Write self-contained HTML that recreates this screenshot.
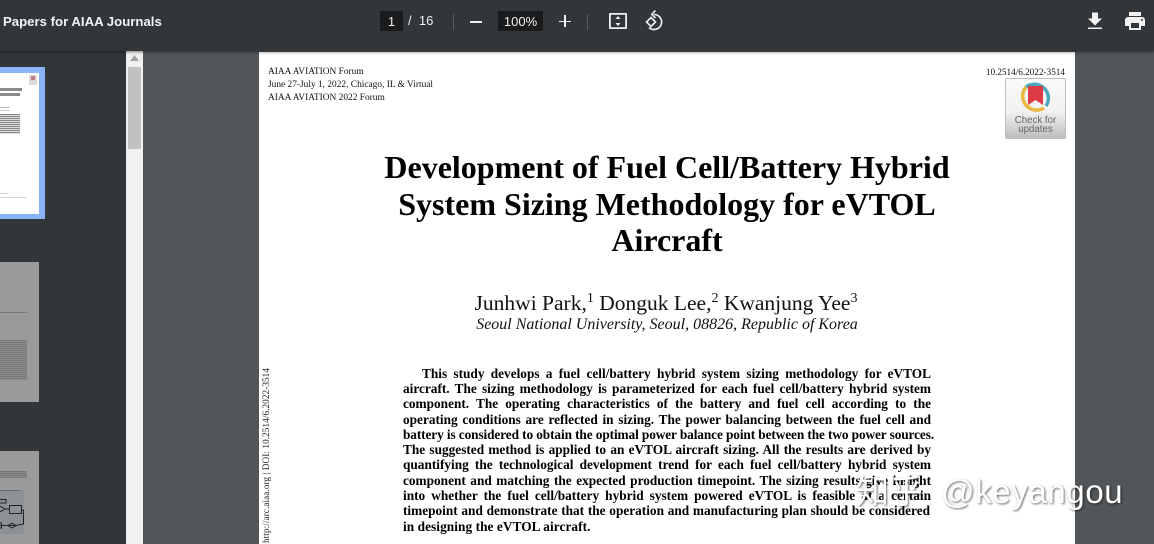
<!DOCTYPE html>
<html lang="en"><head><meta charset="utf-8"><title>Papers for AIAA Journals</title>
<style>
html,body{margin:0;padding:0;width:1154px;height:544px;overflow:hidden;background:#525659}
*{box-sizing:border-box}
.a{position:absolute;white-space:nowrap}
#tb{position:absolute;left:0;top:0;width:1154px;height:51px;background:#323639;box-shadow:0 1px 3px rgba(0,0,0,.5);z-index:5;font-family:"Liberation Sans",sans-serif;color:#f1f1f1}
#side{position:absolute;left:0;top:51px;width:126px;height:493px;background:#323639}
#sb{position:absolute;left:126px;top:51px;width:17px;height:493px;background:#f1f1f1}
#page{position:absolute;left:259px;top:52px;width:816px;height:492px;background:#fff;font-family:"Liberation Serif",serif;color:#111}
.s{font-size:9.4px;line-height:13px;position:absolute;white-space:nowrap}
.t{position:absolute;left:0;width:816px;text-align:center;font-weight:bold;font-size:32px;line-height:37px;color:#000;white-space:nowrap}
.j{position:absolute;left:144px;width:528px;font-weight:bold;font-size:13.3px;line-height:15px;text-align:justify;text-align-last:justify;white-space:nowrap;color:#000}
</style></head><body>
<div id="side">
 <div class="a" style="left:0;top:16px;width:45px;height:152px;background:#8ab4f8"></div>
 <div class="a" style="left:0;top:22px;width:39px;height:141px;background:#fff;overflow:hidden">
  <div class="a" style="left:29px;top:2px;width:8px;height:10px;background:#e0d8d8"></div>
  <div class="a" style="left:31px;top:3px;width:4px;height:4px;background:#c07a82"></div>
  <div class="a" style="left:0;top:15px;width:22px;height:3px;background:#8a8a8a"></div>
  <div class="a" style="left:0;top:20px;width:20px;height:3px;background:#8a8a8a"></div>
  <div class="a" style="left:0;top:34px;width:10px;height:1px;background:#bbb"></div>
  <div class="a" style="left:0;top:37px;width:10px;height:1px;background:#ccc"></div>
  <div class="a" style="left:0;top:41px;width:20px;height:20px;background:repeating-linear-gradient(#888 0 1px,#ddd 1px 2px)"></div>
  <div class="a" style="left:0;top:120px;width:8px;height:1px;background:#ccc"></div>
  <div class="a" style="left:0;top:124px;width:26px;height:1px;background:#d4d4d4"></div>
 </div>
 <div class="a" style="left:0;top:211px;width:39px;height:140px;background:#9a9a9a;overflow:hidden">
  <div class="a" style="left:0;top:50px;width:27px;height:1px;background:#777"></div>
  <div class="a" style="left:0;top:78px;width:27px;height:40px;background:repeating-linear-gradient(#777 0 1px,#8d8d8d 1px 2px)"></div>
 </div>
 <div class="a" style="left:0;top:400px;width:39px;height:93px;background:#9b9b9b;overflow:hidden">
  <div class="a" style="left:0;top:20px;width:27px;height:7px;background:repeating-linear-gradient(#777 0 1px,#8d8d8d 1px 2px)"></div>
  <div class="a" style="left:0;top:39px;width:24px;height:44px;background:#8e9194"></div>
  <div class="a" style="left:0;top:39px;width:20px;height:1px;background:#666"></div>
  <svg class="a" style="left:0;top:48px" width="26" height="45" fill="none" stroke="#222" stroke-width="1"><path d="M0 .5H6V4H0M0 7L5 10 0 13M5 10H9M9.500 6.500H21.500V14.500H9.500ZM21.500 11H23.500V25L16 26.500H0M16 26.500L12 24 8 26.500 12 29 16 26.500M8 26.500H2M0 24H1.500V29H0"/></svg>
 </div>
</div>
<div id="sb">
 <svg class="a" style="left:4px;top:4px" width="9" height="6"><path d="M4.500 0L9 6H0Z" fill="#a3a3a3"/></svg>
 <div class="a" style="left:2px;top:16px;width:13px;height:82px;background:#c1c1c1"></div>
</div>
<div id="page">
 <div class="s" style="left:9px;top:14px">AIAA AVIATION Forum</div>
 <div class="s" style="left:9px;top:27px">June 27-July 1, 2022, Chicago, IL &amp; Virtual</div>
 <div class="s" style="left:9px;top:40px">AIAA AVIATION 2022 Forum</div>
 <div class="s" style="right:10px;top:14px;font-size:9.2px">10.2514/6.2022-3514</div>
 <div class="a" style="left:746px;top:26px;width:61px;height:61px;border:1px solid #bdbdbd;border-radius:2px;background:linear-gradient(#fafafa,#f2f2f2 55%,#bdbdbd)">
  <svg class="a" style="left:13px;top:2px" width="33" height="33" fill="none"><path d="M7 6A14 14 0 0 0 25 27" stroke="#e9b93f" stroke-width="3.500"/><path d="M7 6A14 14 0 0 1 27 25" stroke="#4aa8bd" stroke-width="3.500"/><path d="M9 5H24V24L16.500 19 9 24Z" fill="#dd3a44"/></svg>
  <div class="a" style="left:0;width:59px;top:37px;text-align:center;font:9.700px/9px 'Liberation Sans',sans-serif;color:#666">Check for<br>updates</div>
 </div>
 <div class="t" style="top:97px">Development of Fuel Cell/Battery Hybrid</div>
 <div class="t" style="top:134px">System Sizing Methodology for eVTOL</div>
 <div class="t" style="top:170px">Aircraft</div>
 <div class="a" style="left:-1px;width:816px;top:239px;text-align:center;font-size:21.500px;line-height:24px;color:#111">Junhwi Park,<sup style="font-size:14px;line-height:0">1</sup> Donguk Lee,<sup style="font-size:14px;line-height:0">2</sup> Kwanjung Yee<sup style="font-size:14px;line-height:0">3</sup></div>
 <div class="a" style="left:0;width:816px;top:263px;text-align:center;font-size:16px;line-height:20px;font-style:italic;color:#111">Seoul National University, Seoul, 08826, Republic of Korea</div>
 <div class="j" style="top:314px;left:163px;width:509px">This study develops a fuel cell/battery hybrid system sizing methodology for eVTOL</div>
 <div class="j" style="top:329px">aircraft. The sizing methodology is parameterized for each fuel cell/battery hybrid system</div>
 <div class="j" style="top:344px">component. The operating characteristics of the battery and fuel cell according to the</div>
 <div class="j" style="top:360px">operating conditions are reflected in sizing. The power balancing between the fuel cell and</div>
 <div class="j" style="top:375px;width:531px;letter-spacing:-.1px">battery is considered to obtain the optimal power balance point between the two power sources.</div>
 <div class="j" style="top:390px">The suggested method is applied to an eVTOL aircraft sizing. All the results are derived by</div>
 <div class="j" style="top:405px">quantifying the technological development trend for each fuel cell/battery hybrid system</div>
 <div class="j" style="top:421px">component and matching the expected production timepoint. The sizing results give insight</div>
 <div class="j" style="top:436px">into whether the fuel cell/battery hybrid system powered eVTOL is feasible at a certain</div>
 <div class="j" style="top:451px;width:527px">timepoint and demonstrate that the operation and manufacturing plan should be considered</div>
 <div class="j" style="top:467px;text-align-last:left;width:auto;letter-spacing:.07px">in designing the eVTOL aircraft.</div>
 <div class="a" style="left:2px;top:491px;font-size:9.200px;line-height:11px;color:#222;transform-origin:0 0;transform:rotate(-90deg);letter-spacing:.08px">http://arc.aiaa.org | DOI: 10.2514/6.2022-3514</div>
</div>
<div class="a" style="left:856px;top:473px;font:33px/38px 'Liberation Sans','Noto Sans CJK SC',sans-serif;color:#fff;text-shadow:1px 1px 2px rgba(0,0,0,.6);letter-spacing:.6px;z-index:3">知乎<span style="margin-left:18px">@keyangou</span></div>
<div id="tb">
 <div class="a" style="left:3px;top:13px;font-size:13.200px;line-height:18px;font-weight:bold;color:#f1f3f4">Papers for AIAA Journals</div>
 <div class="a" style="left:380px;top:11px;width:23px;height:20px;background:#191b1c;font-size:13px;line-height:21px;text-align:center">1</div>
 <div class="a" style="left:408px;top:11px;font-size:13px;line-height:19px">/&nbsp; 16</div>
 <div class="a" style="left:453px;top:14px;width:1px;height:16px;background:#5a5e61"></div>
 <div class="a" style="left:470px;top:21px;width:12px;height:1.500px;background:#f1f1f1"></div>
 <div class="a" style="left:498px;top:11px;width:45px;height:20px;background:#191b1c;font-size:13px;line-height:21px;text-align:center">100%</div>
 <div class="a" style="left:559px;top:20.500px;width:12px;height:1.500px;background:#f1f1f1"></div>
 <div class="a" style="left:564.300px;top:15px;width:1.500px;height:12px;background:#f1f1f1"></div>
 <div class="a" style="left:587px;top:14px;width:1px;height:16px;background:#5a5e61"></div>
 <svg class="a" style="left:606px;top:9px" width="24" height="24" fill="#f1f1f1"><path d="M4 4H20A1 1 0 0 1 21 5V19A1 1 0 0 1 20 20H4A1 1 0 0 1 3 19V5A1 1 0 0 1 4 4ZM4.800 5.800V18.200H19.200V5.800Z"/><path d="M12 7L14.500 10H9.500ZM12 17L9.500 14H14.500Z"/></svg>
 <svg class="a" style="left:642px;top:8px" width="24" height="24" fill="none" stroke="#f1f1f1" stroke-width="1.600"><path d="M12 6.500A7.500 7.500 0 1 1 7 19.500"/><path d="M13.500 2.500L9.800 6.300 13.500 10" /><path d="M9 9.500L13.500 14 9 18.500 4.500 14Z"/></svg>
 <svg class="a" style="left:1083px;top:9px" width="24" height="24" fill="#f1f1f1"><path d="M19 9.500H15V3.500H9V9.500H5L12 16.500ZM5 18.500V20H19V18.500Z"/></svg>
 <svg class="a" style="left:1123px;top:9px" width="24" height="24" fill="#f1f1f1"><path d="M19 8H5A3 3 0 0 0 2 11V17H6V21H18V17H22V11A3 3 0 0 0 19 8ZM16 19H8V14H16ZM19 12A1 1 0 1 1 19 10 1 1 0 0 1 19 12ZM18 3H6V7H18Z"/></svg>
</div>
</body></html>
